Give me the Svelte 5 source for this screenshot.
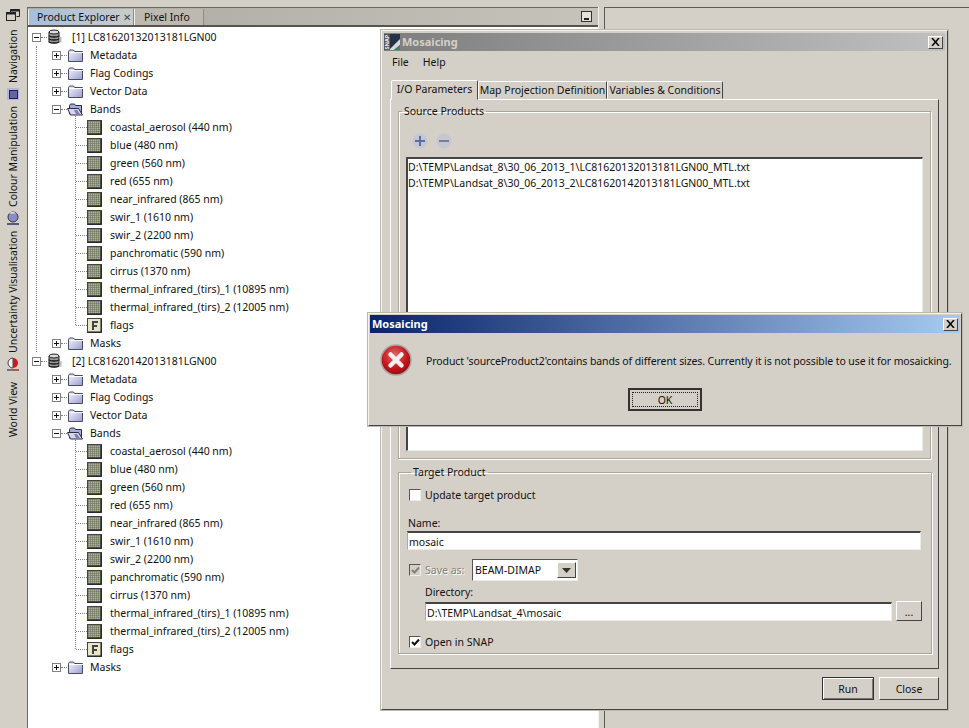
<script>
  const bands = [
    'coastal_aerosol (440 nm)',
    'blue (480 nm)',
    'green (560 nm)',
    'red (655 nm)',
    'near_infrared (865 nm)',
    'swir_1 (1610 nm)',
    'swir_2 (2200 nm)',
    'panchromatic (590 nm)',
    'cirrus (1370 nm)',
    'thermal_infrared_(tirs)_1 (10895 nm)',
    'thermal_infrared_(tirs)_2 (12005 nm)'
  ];
  const products = [
    { name: '[1] LC81620132013181LGN00', last: false },
    { name: '[2] LC81620142013181LGN00', last: true }
  ];
</script>

{#snippet box(open)}
  <span class="box"><span class="h"></span>{#if !open}<span class="v"></span>{/if}</span>
{/snippet}

{#snippet folder()}
  <svg width="17" height="15" viewBox="0 0 17 15">
    <defs>
      <linearGradient id="fold" x1="0" y1="0" x2="1" y2="1">
        <stop offset="0.300" stop-color="#dcdcf4"/>
        <stop offset="1" stop-color="#9a9ccf"/>
      </linearGradient>
    </defs>
    <path d="M1.500 13.500V3.500l1-1.500h4l1 1.500h8v10z" fill="url(#fold)" stroke="#4a4a60"/>
    <path d="M2 4.500h14" stroke="#fff"/>
  </svg>
{/snippet}

{#snippet openFolder()}
  <svg width="17" height="15" viewBox="0 0 17 15">
    <path d="M2.500 12V3.500l1-1.500h4l1 1.500h6V12z" fill="#a9abd8" stroke="#2c2c40"/>
    <path d="M.5 6.500h11l4 6.500H3.500z" fill="#d5d7f0" stroke="#2c2c40"/>
    <path d="M9 12l-2-4h3l3 4z" fill="#7d80b8"/>
  </svg>
{/snippet}

{#snippet database()}
  <svg width="16" height="16" viewBox="0 0 16 16">
    <path d="M2 3v10c0 2 10 2 10 0V3z" fill="#9a9a9a"/>
    <ellipse cx="7" cy="3" rx="5" ry="2" fill="#dcdcdc" stroke="#222"/>
    <path d="M2 6.500c0 2 10 2 10 0M2 9.500c0 2 10 2 10 0M2 12.500c0 2 10 2 10 0" fill="none" stroke="#111" stroke-width="1.300"/>
    <path d="M2 3v10M12 3v10" stroke="#222"/>
    <path d="M12.500 8h2v5.500h-2z" fill="#bbb"/>
  </svg>
{/snippet}

{#snippet bandIcon()}
  <svg width="15" height="15" viewBox="0 0 15 15">
    <defs>
      <pattern id="dots" width="2" height="2" patternUnits="userSpaceOnUse">
        <rect width="2" height="2" fill="#8f8f78"/>
        <rect width="1" height="1" fill="#b4b47c"/>
        <rect x="1" y="1" width="1" height="1" fill="#72788a"/>
      </pattern>
    </defs>
    <rect x="0.500" y="0.500" width="14" height="14" fill="url(#dots)" stroke="#44443c"/>
    <path d="M14 1v13H1" fill="none" stroke="#111"/>
  </svg>
{/snippet}

{#snippet flagIcon()}
  <svg width="15" height="15" viewBox="0 0 15 15">
    <rect x="0.500" y="0.500" width="14" height="14" fill="#e8e6c8" stroke="#44443c"/>
    <path d="M14 1v13H1" fill="none" stroke="#111"/>
    <path d="M5 3h6v2H7v2h3v2H7v3H5z" fill="#444"/>
  </svg>
{/snippet}

{#snippet tick(disabled)}
  <svg class="tick" width="9" height="9" viewBox="0 0 9 9">
    <path d="M1 4l2.500 2.500L8 1.500" fill="none" stroke={disabled ? '#808080' : '#111'} stroke-width="2"/>
  </svg>
{/snippet}

<div class="screen">
  <nav class="strip">
    <svg class="restore" width="14" height="12" viewBox="0 0 14 12">
      <path d="M4.500 .5h9v7h-3M4.500 .5v3" fill="none" stroke="#222"/>
      <path d="M4.500 1.500h9" stroke="#222" stroke-width="2"/>
      <rect x="0.500" y="3.500" width="9" height="8" fill="#d4d0c8" stroke="#222"/>
      <path d="M.5 4.500h9" stroke="#222" stroke-width="2"/>
    </svg>
    <span class="vert nav-label">Navigation</span>
    <svg class="strip-icon" width="12" height="12" viewBox="0 0 12 12">
      <rect width="12" height="12" fill="#b4b4dc"/>
      <rect x="2.500" y="2.500" width="8" height="8" fill="#6464a0" stroke="#222250"/>
    </svg>
    <span class="vert colour-label">Colour Manipulation</span>
    <svg class="strip-icon" width="14" height="15" viewBox="0 0 14 15">
      <circle cx="7" cy="6" r="5" fill="#8c8cc8" stroke="#333"/>
      <path d="M3 2.500a5 5 0 0 1 7 0z" fill="#ececf6"/>
      <path d="M1 13h12" stroke="#55558c" stroke-width="2"/>
    </svg>
    <span class="vert uncert-label">Uncertainty Visualisation</span>
    <svg class="strip-icon" width="14" height="15" viewBox="0 0 14 15">
      <path d="M7 1a5 5 0 0 0 0 10z" fill="#f4f4f4" stroke="#444"/>
      <path d="M7 1a5 5 0 0 1 0 10z" fill="#d01818"/>
      <path d="M1 13h6" stroke="#8a6a6a" stroke-width="2"/>
      <path d="M7 13h6" stroke="#c05050" stroke-width="2"/>
    </svg>
    <span class="vert world-label">World View</span>
  </nav>

  <section class="explorer">
    <header class="tabbar">
      <div class="ptab active">Product Explorer <span class="tab-x">✕</span></div>
      <div class="ptab info">Pixel Info</div>
      <span class="minimize"><span></span></span>
    </header>
    <div class="tree">
      {#each products as p}
        <div class="row">
          {@render box(true)}
          <span class="stub short"></span>
          <span class="db">{@render database()}</span>
          <span class="label root-label">{p.name}</span>
        </div>
        <div class="children" class:last={p.last}>
          {#each ['Metadata', 'Flag Codings', 'Vector Data'] as name}
            <div class="row">
              {@render box(false)}
              <span class="stub"></span>
              <span class="icon">{@render folder()}</span>
              <span class="label">{name}</span>
            </div>
          {/each}
          <div class="row">
            {@render box(true)}
            <span class="stub"></span>
            <span class="icon">{@render openFolder()}</span>
            <span class="label">Bands</span>
          </div>
          <div class="bands">
            {#each bands as b}
              <div class="row">
                <span class="stub long"></span>
                <span class="band">{@render bandIcon()}</span>
                <span class="label">{b}</span>
              </div>
            {/each}
            <div class="row">
              <span class="stub long"></span>
              <span class="band">{@render flagIcon()}</span>
              <span class="label">flags</span>
            </div>
          </div>
          <div class="row">
            {@render box(false)}
            <span class="stub"></span>
            <span class="icon">{@render folder()}</span>
            <span class="label">Masks</span>
          </div>
        </div>
      {/each}
    </div>
  </section>

  <section class="rightpane"></section>

  <div class="window mosaic">
    <div class="titlebar inactive">
      <svg class="logo" width="16" height="16" viewBox="0 0 16 16">
        <rect width="16" height="16" fill="#26304c"/>
        <path d="M5 16L16 5v6l-6 5z" fill="#d8d8d8"/>
        <path d="M10 16l6-5v5z" fill="#3a8a60"/>
        <rect width="6" height="16" fill="#555"/>
        <text x="-15.500" y="5" transform="rotate(-90)" font-size="5.500" font-weight="bold" fill="#f0f0f0">SNAP</text>
      </svg>
      <span class="title-text">Mosaicing</span>
      <span class="close">
        <svg width="9" height="8" viewBox="0 0 9 8"><path d="M1 0l7 8M8 0L1 8" stroke="#000" stroke-width="1.500"/></svg>
      </span>
    </div>
    <div class="menu"><span>File</span><span>Help</span></div>
    <div class="dlg-tabs">
      <div class="dtab selected">I/O Parameters</div>
      <div class="dtab second">Map Projection Definition</div>
      <div class="dtab third">Variables &amp; Conditions</div>
    </div>
    <div class="tabpanel">
      <fieldset class="group source">
        <legend>Source Products</legend>
        <div class="tools">
          <span class="round"><svg width="20" height="20" viewBox="0 0 20 20">
            <circle cx="10" cy="10" r="7.500" fill="#c4c6d4"/><path d="M10 5v10M5 10h10" stroke="#5a6ea8" stroke-width="2"/>
          </svg></span>
          <span class="round"><svg width="20" height="20" viewBox="0 0 20 20">
            <circle cx="10" cy="10" r="7.500" fill="#c4c6d0"/><path d="M5 10h10" stroke="#7a7e94" stroke-width="2"/>
          </svg></span>
        </div>
        <div class="listbox">
          <div>D:\TEMP\Landsat_8\30_06_2013_1\LC81620132013181LGN00_MTL.txt</div>
          <div>D:\TEMP\Landsat_8\30_06_2013_2\LC81620142013181LGN00_MTL.txt</div>
        </div>
      </fieldset>
      <fieldset class="group target">
        <legend>Target Product</legend>
        <label class="check first"><span class="cb"></span>Update target product</label>
        <div class="field-label">Name:</div>
        <div class="input name">mosaic</div>
        <div class="saveas">
          <label class="check disabled"><span class="cb grey">{@render tick(true)}</span>Save as:</label>
          <div class="combo">
            <span>BEAM-DIMAP</span>
            <span class="arrow"><svg width="9" height="5" viewBox="0 0 9 5"><path d="M0 0h9L4.500 5z" fill="#333"/></svg></span>
          </div>
        </div>
        <div class="dir">
          <div class="field-label dirlabel">Directory:</div>
          <div class="dirrow">
            <div class="input path">D:\TEMP\Landsat_4\mosaic</div>
            <button class="btn dots">...</button>
          </div>
        </div>
        <label class="check open"><span class="cb">{@render tick(false)}</span>Open in SNAP</label>
      </fieldset>
    </div>
    <div class="actions">
      <button class="btn run">Run</button>
      <button class="btn closebtn">Close</button>
    </div>
  </div>

  <div class="window alert">
    <div class="titlebar active-title">
      <span class="title-text">Mosaicing</span>
      <span class="close">
        <svg width="9" height="8" viewBox="0 0 9 8"><path d="M1 0l7 8M8 0L1 8" stroke="#000" stroke-width="1.500"/></svg>
      </span>
    </div>
    <div class="alert-body">
      <svg class="err-icon" width="32" height="32" viewBox="0 0 32 32">
        <defs>
          <radialGradient id="err" cx="0.450" cy="0.350" r="0.700">
            <stop offset="0" stop-color="#e86a6a"/>
            <stop offset="0.600" stop-color="#c4161c"/>
            <stop offset="1" stop-color="#8c0c10"/>
          </radialGradient>
        </defs>
        <circle cx="16" cy="16" r="15" fill="url(#err)" stroke="#a8a4a4" stroke-width="1.500"/>
        <path d="M10.500 10.500l11 11M21.500 10.500l-11 11" stroke="#f4f0f0" stroke-width="4.500" stroke-linecap="round"/>
      </svg>
      <p>Product 'sourceProduct2'contains bands of different sizes. Currently it is not possible to use it for mosaicking.</p>
    </div>
    <div class="alert-actions">
      <button class="btn ok"><span>OK</span></button>
    </div>
  </div>
</div>

<style>
  :global(body) {
    margin: 0;
    background: #d4d0c8;
  }
  .screen {
    position: relative;
    display: flex;
    width: 969px;
    height: 728px;
    overflow: hidden;
    background: #d4d0c8;
    color: #111;
    font-family: "Noto Sans", sans-serif;
    font-size: 10.500px;
  }

  /* left strip */
  .strip {
    flex: none;
    width: 26px;
    display: flex;
    flex-direction: column;
    align-items: center;
    padding: 9px 1px 0 0;
  }
  .restore { margin-bottom: 9px; flex: none; }
  .vert {
    writing-mode: vertical-rl;
    transform: rotate(180deg);
    white-space: nowrap;
    line-height: 14px;
    flex: none;
  }
  .strip-icon { margin: 0; flex: none; }
  .nav-label { height: 53px; margin-bottom: 5px; }
  .colour-label { height: 94px; margin: 13px 0 4px; }
  .uncert-label { height: 116px; margin: 11px 0 4px; }
  .world-label { height: 53px; margin-top: 12px; }

  /* product explorer */
  .explorer {
    flex: none;
    width: 571px;
    margin-top: 7px;
    display: flex;
    flex-direction: column;
    border-right: 1px solid #f4f2ec;
  }
  .tabbar {
    display: flex;
    align-items: stretch;
    height: 16px;
    padding-top: 1px;
    background: linear-gradient(90deg, #aaa8a0, #c6c3bb);
    border-top: 1px solid #6a6a64;
    border-left: 1px solid #6a6a64;
    border-bottom: 2px solid #55544f;
  }
  .ptab {
    box-sizing: border-box;
    display: flex;
    align-items: center;
    padding-left: 8px;
    white-space: nowrap;
    background: #bdb9b1;
    border-right: 1px solid #8e8c85;
    border-left: 1px solid #f0eee8;
  }
  .ptab.active {
    width: 106px;
    justify-content: space-between;
    padding-right: 2px;
    background: linear-gradient(90deg, #a5bfdc, #c8cccc);
  }
  .ptab.info { width: 70px; padding-left: 9px; }
  .tab-x { font-size: 10px; color: #444; }
  .minimize {
    margin: 2px 6px 0 auto;
    width: 9px;
    height: 9px;
    border: 1px solid #333;
    background: #e4e2da;
    display: flex;
    align-items: flex-end;
    justify-content: center;
  }
  .minimize span {
    width: 5px;
    height: 2px;
    margin-bottom: 1px;
    background: #222;
  }
  .tree {
    flex: 1;
    background: #fff;
    border-left: 1px solid #6a6a64;
    padding-top: 1px;
    overflow: hidden;
  }
  .row {
    display: flex;
    align-items: center;
    height: 18px;
    white-space: nowrap;
  }
  .tree > .row { padding-left: 4px; }
  .box {
    flex: none;
    position: relative;
    width: 7px;
    height: 7px;
    border: 1px solid #808080;
    background: #fff;
  }
  .box .h {
    position: absolute;
    left: 1px;
    top: 3px;
    width: 5px;
    height: 1px;
    background: #111;
  }
  .box .v {
    position: absolute;
    left: 3px;
    top: 1px;
    width: 1px;
    height: 5px;
    background: #111;
  }
  .stub {
    flex: none;
    width: 6px;
    border-top: 1px dotted #808080;
  }
  .stub.short { width: 6px; }
  .stub.long { width: 11px; }
  .db { margin-right: 9px; height: 16px; }
  .icon { margin: 0 6px 0 0; height: 15px; }
  .band { margin-right: 8px; height: 15px; }
  .children {
    position: relative;
    margin-left: 8px;
    padding-left: 15px;
    border-left: 1px dotted #808080;
  }
  .children.last { border-left-color: transparent; }
  .bands {
    position: relative;
    margin-left: 23px;
    padding-left: 1px;
  }
  .bands::before {
    content: "";
    position: absolute;
    left: 0;
    top: -4px;
    bottom: 9px;
    border-left: 1px dotted #808080;
  }
  .rightpane {
    flex: none;
    margin: 7px 0 0 5px;
    width: 365px;
    border-top: 1px solid #5c5c56;
    border-left: 1px solid #5c5c56;
  }

  /* dialogs */
  .window {
    position: absolute;
    box-sizing: border-box;
    background: #d4d0c8;
    border: 1px solid;
    border-color: #f4f2ec #444 #444 #f4f2ec;
    outline: 1px solid #bbb8b0;
    padding: 2px;
    display: flex;
    flex-direction: column;
  }
  .mosaic {
    left: 381px;
    top: 30px;
    width: 567px;
    height: 680px;
  }
  .alert {
    left: 368px;
    top: 313px;
    width: 594px;
    height: 113px;
    padding: 1px;
  }
  .titlebar {
    flex: none;
    display: flex;
    align-items: center;
    height: 18px;
    font-weight: bold;
    color: #fff;
    padding: 0 1px;
  }
  .titlebar.inactive {
    background: linear-gradient(90deg, #7e7e7e, #c0c0c0);
    color: #d4d0c8;
  }
  .active-title { background: linear-gradient(90deg, #0a246a, #a6caf0); }
  .title-text { font-size: 11px; margin: 0 0 2px 1px; }
  .logo { margin: 0 1px 0 -1px; }
  .close {
    margin-left: auto;
    margin-right: 1px;
    width: 15px;
    height: 13px;
    box-sizing: border-box;
    display: flex;
    align-items: center;
    justify-content: center;
    background: #d4d0c8;
    border: 1px solid;
    border-color: #fff #444 #444 #fff;
  }
  .menu {
    flex: none;
    display: flex;
    gap: 14px;
    height: 21px;
    padding-bottom: 1px;
    align-items: center;
    padding-left: 8px;
  }
  .dlg-tabs {
    display: flex;
    align-items: flex-end;
    height: 26px;
    padding-left: 7px;
  }
  .dtab {
    box-sizing: border-box;
    height: 18px;
    display: flex;
    align-items: center;
    justify-content: center;
    border: 1px solid;
    border-color: #fff #444 transparent #fff;
    border-radius: 2px 2px 0 0;
    white-space: nowrap;
    width: 116px;
    padding-bottom: 1px;
  }
  .dtab.selected {
    height: 20px;
    width: 87px;
    position: relative;
    z-index: 1;
    margin-bottom: -1px;
    background: #d4d0c8;
    padding-bottom: 3px;
  }
  .dtab.second { width: 129px; }
  .tabpanel {
    box-sizing: border-box;
    width: 549px;
    height: 570px;
    margin-left: 6px;
    border: 1px solid;
    border-color: #fff #444 #444 #fff;
    padding: 5px 7px 7px;
    display: flex;
    flex-direction: column;
    gap: 7px;
  }
  .group {
    margin: 0;
    box-sizing: border-box;
    border: 1px solid #a8a59d;
    box-shadow: 1px 1px 0 #fff, inset 1px 1px 0 #fff;
    padding: 0;
  }
  .group legend {
    margin-left: 3px;
    padding: 0 2px 1px;
    line-height: 12px;
  }
  .source { height: 354px; }
  .target {
    height: 188px;
    padding: 0 9px;
    flex: none;
  }
  .tools {
    display: flex;
    gap: 4px;
    padding: 7px 0 0 11px;
    height: 30px;
    box-sizing: border-box;
    margin-top: 4px;
    align-items: center;
  }
  .round { height: 20px; }
  .listbox {
    box-sizing: border-box;
    height: 294px;
    margin: 5px 7px 0;
    background: #fff;
    border: 1px solid;
    border-width: 2px 1px 1px 2px;
    border-color: #444 #eeece6 #eeece6 #444;
    line-height: 16px;
  }
  .listbox div { white-space: nowrap; }
  .check {
    display: flex;
    align-items: center;
    gap: 4px;
    height: 14px;
    white-space: nowrap;
    line-height: 12px;
  }
  .check.first { margin: 9px 0 0 1px; }
  .check.disabled { color: #85827a; text-shadow: 1px 1px 0 #fff; margin-left: 1px; width: 58px; flex: none; }
  .check.open { margin: 14px 0 0 1px; }
  .cb {
    box-sizing: border-box;
    width: 12px;
    height: 12px;
    background: #fff;
    border: 1px solid;
    border-color: #555 #eeece6 #eeece6 #555;
    display: flex;
    align-items: center;
    justify-content: center;
  }
  .cb.grey { background: #d4d0c8; }
  .field-label { line-height: 12px; margin: 15px 0 1px; }
  .input {
    box-sizing: border-box;
    background: #fff;
    border: 1px solid;
    border-width: 2px 1px 1px 1px;
    border-color: #444 #eeece6 #eeece6 #aaa;
    display: flex;
    align-items: center;
    white-space: nowrap;
    padding-top: 2px;
  }
  .input.name { height: 19px; margin-top: 2px; width: 514px; padding-left: 1px; margin-left: -1px; }
  .saveas {
    display: flex;
    align-items: center;
    gap: 5px;
    margin-top: 9px;
    height: 22px;
  }
  .combo {
    box-sizing: border-box;
    width: 106px;
    height: 22px;
    background: #fff;
    border: 1px solid #eeece6;
    border-top-color: #555;
    border-left-color: #555;
    display: flex;
    align-items: center;
    justify-content: space-between;
    padding-left: 2px;
  }
  .arrow {
    box-sizing: border-box;
    width: 19px;
    height: 16px;
    margin-right: 1px;
    background: #d4d0c8;
    border: 1px solid;
    border-color: #fff #444 #444 #fff;
    display: flex;
    align-items: center;
    justify-content: center;
  }
  .dir { padding-left: 17px; margin-top: 5px; }
  .dirlabel { margin-top: 0; }
  .dirrow {
    display: flex;
    align-items: flex-start;
    gap: 4px;
    margin-top: 4px;
  }
  .input.path { width: 467px; height: 19px; padding-left: 1px; }
  .btn {
    box-sizing: border-box;
    font: inherit;
    color: inherit;
    padding: 1px 0 0;
    background: #d4d0c8;
    border: 1px solid;
    border-color: #fff #444 #444 #fff;
  }
  .dots { width: 26px; height: 20px; margin-top: -1px; }
  .actions {
    display: flex;
    justify-content: flex-end;
    gap: 5px;
    padding: 8px 6px 0 0;
  }
  .run {
    width: 52px;
    height: 23px;
    border: 1px solid #333;
    box-shadow: inset 1px 1px 0 #fff, inset -1px -1px 0 #777;
  }
  .closebtn { width: 60px; height: 23px; }
  .alert-body {
    display: flex;
    align-items: center;
    gap: 14px;
    padding-left: 10px;
    height: 54px;
    flex: none;
  }
  .err-icon { flex: none; }
  .alert-body p { margin: 1px 0 0; white-space: nowrap; letter-spacing: -0.100px; }
  .alert-actions {
    display: flex;
    justify-content: center;
    margin-top: 1px;
  }
  .ok {
    width: 74px;
    height: 23px;
    border: 2px solid #333;
    padding: 2px;
  }
  .ok span {
    display: block;
    height: 15px;
    line-height: 13px;
    padding-top: 1px;
    box-sizing: border-box;
    border: 1px dotted #222;
  }
</style>
